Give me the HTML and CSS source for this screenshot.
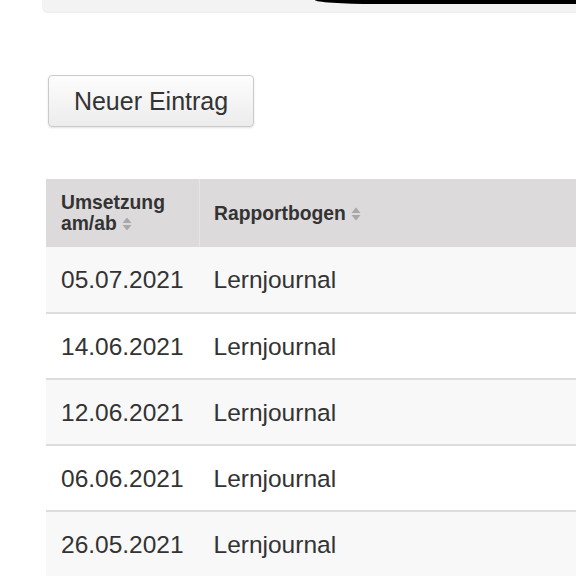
FILE: index.html
```html
<!DOCTYPE html>
<html lang="de">
<head>
<meta charset="utf-8">
<link rel="stylesheet" href="styles.css">
</head>
<body>
<div class="page">
  <div class="topbox"><div class="blackbar"></div></div>
  <div class="actions">
    <button class="btn" type="button">Neuer Eintrag</button>
  </div>
  <table class="grid">
    <thead>
      <tr>
        <th class="col-date">Umsetzung<br>am/ab<span class="sort"><svg width="10" height="14" viewBox="0 0 10 14"><path d="M5 0.5 L9.5 6 L0.5 6 Z M5 13.5 L9.5 8 L0.5 8 Z" fill="#a8a8a8"/></svg></span></th>
        <th class="col-name">Rapportbogen<span class="sort"><svg width="10" height="14" viewBox="0 0 10 14"><path d="M5 0.5 L9.5 6 L0.5 6 Z M5 13.5 L9.5 8 L0.5 8 Z" fill="#a8a8a8"/></svg></span></th>
      </tr>
    </thead>
    <tbody>
      <tr><td>05.07.2021</td><td>Lernjournal</td></tr>
      <tr><td>14.06.2021</td><td>Lernjournal</td></tr>
      <tr><td>12.06.2021</td><td>Lernjournal</td></tr>
      <tr><td>06.06.2021</td><td>Lernjournal</td></tr>
      <tr><td>26.05.2021</td><td>Lernjournal</td></tr>
    </tbody>
  </table>
</div>
</body>
</html>
```
FILE: styles.css
```css
html, body {
  margin: 0;
  padding: 0;
  background: #fff;
  overflow: hidden;
}
body {
  font-family: "Liberation Sans", Arial, sans-serif;
  color: #333;
}
.page {
  padding-left: 46px;
}
.topbox {
  position: relative;
  margin-left: -4px;
  height: 12px;
  background: #f3f3f3;
  border-bottom-left-radius: 6px;
  border-bottom: 1px solid #ececec;
}
.blackbar {
  position: absolute;
  top: 0;
  left: 273px;
  right: 0;
  height: 4px;
  background: #000;
  border-bottom-left-radius: 60px 4px;
}
.actions {
  padding-top: 62px;
  padding-left: 2px;
}
.btn {
  display: block;
  width: 206px;
  height: 52px;
  padding: 0;
  font-family: "Liberation Sans", Arial, sans-serif;
  font-size: 25px;
  color: #333;
  background: linear-gradient(#fdfdfd, #ececec);
  border: 1px solid #cacaca;
  border-radius: 4px;
  box-shadow: 0 1px 2px rgba(0,0,0,0.12);
}
.grid {
  margin-top: 52px;
  width: 620px;
  border-collapse: collapse;
}
.grid th {
  background: #dcdadb;
  height: 68px;
  padding: 0 0 0 15px;
  text-align: left;
  font-size: 19.3px;
  line-height: 21px;
  font-weight: bold;
  color: #333;
  vertical-align: middle;
}
.grid th.col-date {
  width: 138px;
  border-right: 1px solid #e6e4e5;
}
.grid th.col-name {
  padding-left: 14px;
}
.sort {
  display: inline-block;
  margin-left: 5px;
  vertical-align: -1px;
}
.sort svg {
  display: block;
}
.grid td {
  height: 66px;
  padding: 1px 0 0 15px;
  box-sizing: border-box;
  font-size: 24.5px;
  color: #333;
  border-bottom: 2px solid #dddddd;
  vertical-align: middle;
}
.grid td + td {
  padding-left: 14px;
}
.grid tbody tr:nth-child(odd) td {
  background: #f8f8f8;
}
.grid tbody tr:nth-child(even) td {
  background: #ffffff;
}
```
